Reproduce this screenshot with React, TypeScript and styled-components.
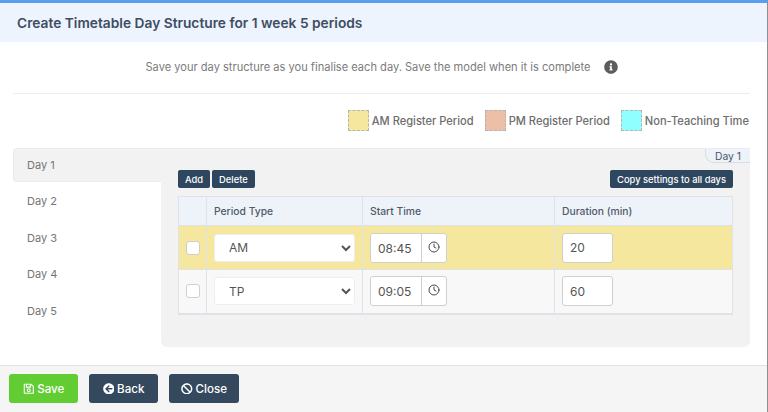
import React from "react";
import styled, { createGlobalStyle } from "styled-components";
import { FaArrowCircleLeft, FaBan, FaInfoCircle, FaRegSave } from "react-icons/fa";
import { FiClock } from "react-icons/fi";

const GlobalStyle = createGlobalStyle`
  html, body {
    margin: 0;
    padding: 0;
    background: #fff;
    overflow: hidden;
  }
  * {
    box-sizing: border-box;
  }
  body, button, input, select {
    font-family: Inter, "Noto Sans", sans-serif;
  }
`;

const Page = styled.div`
  width: 768px;
  height: 412px;
  display: flex;
  flex-direction: column;
  border-top: 3px solid #5b9df0;
  border-right: 1px solid #8f8f8f;
  background: #fff;
`;

const Header = styled.div`
  height: 39px;
  flex: none;
  display: flex;
  align-items: center;
  padding: 0 17px;
  background: #edf4fe;
  color: #3f4d63;
  font-size: 13.75px;
  font-weight: 600;
`;

const Body = styled.div`
  flex: 1;
  min-height: 0;
  padding: 0 17px 0 13px;
`;

const Hint = styled.div`
  height: 52px;
  display: flex;
  align-items: center;
  justify-content: center;
  gap: 13px;
  padding-bottom: 2px;
  border-bottom: 1px solid #eeeeee;
  color: #7b7b7b;
  font-size: 11.1px;
  svg {
    color: #5c5c5c;
    font-size: 14px;
  }
`;

const Legend = styled.div`
  height: 54px;
  display: flex;
  align-items: center;
  justify-content: flex-end;
  gap: 11px;
  padding: 0 1px 1px 0;
`;

const LegendItem = styled.div`
  display: flex;
  align-items: center;
  gap: 3px;
  color: #6d6d6d;
  font-size: 11.1px;
  font-weight: 500;
`;

const Swatch = styled.span<{ $color: string }>`
  width: 21px;
  height: 21px;
  background: ${(p) => p.$color};
  border: 1px dashed #b5b5b5;
`;

const Tabs = styled.div`
  display: flex;
  height: 199px;
`;

const DayList = styled.div`
  width: 148px;
  flex: none;
`;

const DayTab = styled.div<{ $active?: boolean }>`
  height: ${(p) => (p.$active ? "34px" : "36.6px")};
  display: flex;
  align-items: center;
  padding-left: ${(p) => (p.$active ? "13px" : "14px")};
  color: #757575;
  font-size: 11px;
  background: ${(p) => (p.$active ? "#f2f2f2" : "#fff")};
  border: ${(p) => (p.$active ? "1px solid #ececec" : "none")};
  border-right: none;
  border-radius: 4px 0 0 4px;
  margin-bottom: ${(p) => (p.$active ? "1px" : "0")};
`;

const Panel = styled.div`
  position: relative;
  flex: 1;
  padding: 21px 17px 0;
  background: #f2f2f2;
  border-top: 1px solid #ececec;
  border-radius: 0 0 6px 6px;
`;

const DayBadge = styled.div`
  position: absolute;
  top: 0;
  right: 0;
  width: 45px;
  height: 14px;
  display: flex;
  align-items: center;
  justify-content: center;
  background: #eef2f9;
  border-left: 1px solid #d9dde3;
  border-bottom: 1px solid #d9dde3;
  border-bottom-left-radius: 9px;
  color: #4a5568;
  font-size: 10.3px;
`;

const Toolbar = styled.div`
  display: flex;
  gap: 2px;
  margin-bottom: 8px;
`;

const SmallButton = styled.button<{ $push?: boolean }>`
  height: 18px;
  padding: 0 7px;
  border: none;
  border-radius: 2px;
  background: #2f465f;
  color: #fff;
  font-size: 9.35px;
  font-weight: 500;
  margin-left: ${(p) => (p.$push ? "auto" : "0")};
`;

const Table = styled.div`
  border: 1px solid #dfe2e6;
  border-bottom-width: 2px;
`;

const rowHeights = { head: "28px", am: "44px", tp: "43.5px" };

const Row = styled.div<{ $kind: "head" | "am" | "tp" }>`
  display: grid;
  grid-template-columns: 27px 156px 192px 1fr;
  height: ${(p) => rowHeights[p.$kind]};
  background: ${(p) =>
    p.$kind === "head" ? "#eef2f9" : p.$kind === "am" ? "#f5e79e" : "#f8f8f8"};
  & + & {
    border-top: 1px solid #dfe2e6;
  }
`;

const Cell = styled.div<{ $center?: boolean }>`
  display: flex;
  align-items: center;
  justify-content: ${(p) => (p.$center ? "center" : "flex-start")};
  padding: ${(p) => (p.$center ? "0" : "0 7px")};
  color: #4f5b6b;
  font-size: 10.3px;
  font-weight: 500;
  & + & {
    border-left: 1px solid #dfe2e6;
  }
`;

const Check = styled.input.attrs({ type: "checkbox" })`
  appearance: none;
  width: 14px;
  height: 14px;
  margin: 0;
  background: #fff;
  border: 1px solid #cfcfcf;
  border-radius: 3px;
`;

const TypeSelect = styled.select`
  width: 141px;
  height: 28px;
  padding: 0 0 0 10px;
  border: 1px solid #eeeeee;
  border-radius: 3px;
  background: #fff;
  color: #555;
  font-size: 12px;
`;

const TimeGroup = styled.div`
  display: flex;
  width: 77px;
  height: 30px;
  background: #fff;
  border: 1px solid #cfcfcf;
  border-radius: 3px;
`;

const TimeInput = styled.input`
  width: 51px;
  border: none;
  border-right: 1px solid #cfcfcf;
  border-radius: 3px 0 0 3px;
  padding: 1px 0 0 7px;
  background: #fff;
  color: #555;
  font-size: 12px;
  outline: none;
`;

const ClockAddon = styled.span`
  flex: 1;
  display: flex;
  justify-content: center;
  padding-top: 7px;
  color: #4a4a4a;
  font-size: 12px;
`;

const DurationInput = styled.input`
  width: 51px;
  height: 30px;
  padding: 0 7px;
  background: #fff;
  border: 1px solid #cfcfcf;
  border-radius: 3px;
  color: #555;
  font-size: 12px;
  outline: none;
`;

const Footer = styled.div`
  height: 47px;
  flex: none;
  display: flex;
  align-items: center;
  gap: 11px;
  padding: 0 9px 1px;
  background: #f5f5f5;
  border-top: 1px solid #e0e0e0;
`;

const FooterButton = styled.button<{ $color: string; $width: number }>`
  height: 29px;
  display: flex;
  align-items: center;
  justify-content: center;
  gap: 3px;
  width: ${(p) => p.$width}px;
  border: none;
  border-radius: 3px;
  background: ${(p) => p.$color};
  color: #fff;
  font-size: 11.6px;
  font-weight: 500;
`;

const days = ["Day 1", "Day 2", "Day 3", "Day 4", "Day 5"];

const rows = [
  { kind: "am" as const, type: "AM", start: "08:45", duration: "20" },
  { kind: "tp" as const, type: "TP", start: "09:05", duration: "60" },
];

export default function App() {
  return (
    <Page>
      <GlobalStyle />
      <Header>Create Timetable Day Structure for 1 week 5 periods</Header>
      <Body>
        <Hint>
          Save your day structure as you finalise each day. Save the model when it is complete
          <FaInfoCircle />
        </Hint>
        <Legend>
          <LegendItem>
            <Swatch $color="#f5e79e" />
            AM Register Period
          </LegendItem>
          <LegendItem>
            <Swatch $color="#ecbfa6" />
            PM Register Period
          </LegendItem>
          <LegendItem>
            <Swatch $color="#8fffff" />
            Non-Teaching Time
          </LegendItem>
        </Legend>
        <Tabs>
          <DayList>
            {days.map((day, i) => (
              <DayTab key={day} $active={i === 0}>
                {day}
              </DayTab>
            ))}
          </DayList>
          <Panel>
            <DayBadge>Day 1</DayBadge>
            <Toolbar>
              <SmallButton>Add</SmallButton>
              <SmallButton>Delete</SmallButton>
              <SmallButton $push>Copy settings to all days</SmallButton>
            </Toolbar>
            <Table>
              <Row $kind="head">
                <Cell />
                <Cell>Period Type</Cell>
                <Cell>Start Time</Cell>
                <Cell>Duration (min)</Cell>
              </Row>
              {rows.map((row) => (
                <Row key={row.type} $kind={row.kind}>
                  <Cell $center>
                    <Check />
                  </Cell>
                  <Cell>
                    <TypeSelect defaultValue={row.type}>
                      <option>AM</option>
                      <option>PM</option>
                      <option>TP</option>
                    </TypeSelect>
                  </Cell>
                  <Cell>
                    <TimeGroup>
                      <TimeInput defaultValue={row.start} />
                      <ClockAddon>
                        <FiClock />
                      </ClockAddon>
                    </TimeGroup>
                  </Cell>
                  <Cell>
                    <DurationInput defaultValue={row.duration} />
                  </Cell>
                </Row>
              ))}
            </Table>
          </Panel>
        </Tabs>
      </Body>
      <Footer>
        <FooterButton $color="#62cc33" $width={69}>
          <FaRegSave />
          Save
        </FooterButton>
        <FooterButton $color="#34495e" $width={69}>
          <FaArrowCircleLeft />
          Back
        </FooterButton>
        <FooterButton $color="#34495e" $width={70}>
          <FaBan />
          Close
        </FooterButton>
      </Footer>
    </Page>
  );
}
